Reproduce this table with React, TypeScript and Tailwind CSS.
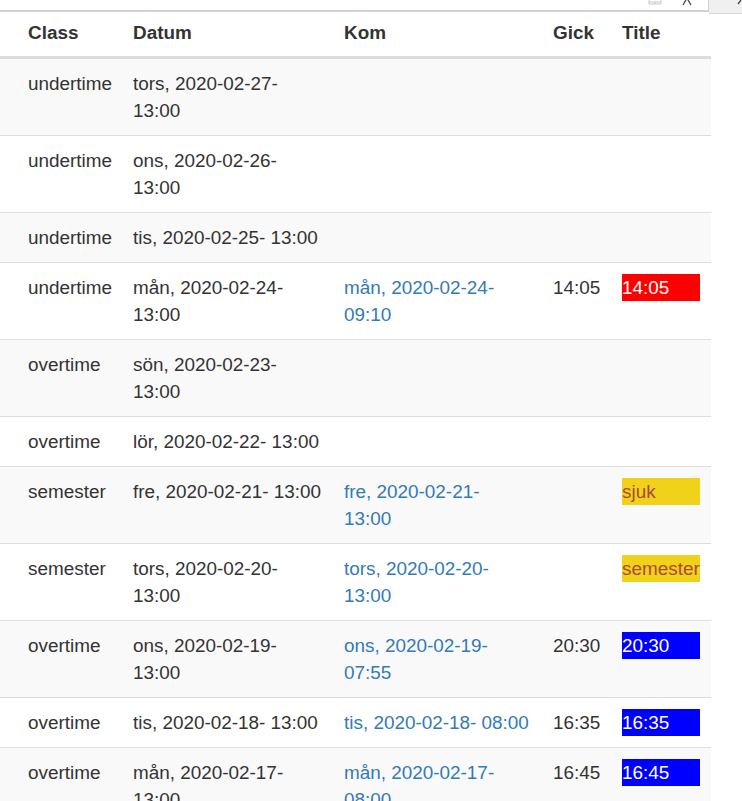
import React from "react";

type Row = {
  cls: string;
  datum: string;
  kom?: string;
  gick?: string;
  title?: { text: string; kind: "red" | "blue" | "yellow" };
};

const rows: Row[] = [
  { cls: "undertime", datum: "tors, 2020-02-27- 13:00" },
  { cls: "undertime", datum: "ons, 2020-02-26- 13:00" },
  { cls: "undertime", datum: "tis, 2020-02-25- 13:00" },
  { cls: "undertime", datum: "mån, 2020-02-24- 13:00", kom: "mån, 2020-02-24- 09:10", gick: "14:05", title: { text: "14:05", kind: "red" } },
  { cls: "overtime", datum: "sön, 2020-02-23- 13:00" },
  { cls: "overtime", datum: "lör, 2020-02-22- 13:00" },
  { cls: "semester", datum: "fre, 2020-02-21- 13:00", kom: "fre, 2020-02-21- 13:00", title: { text: "sjuk", kind: "yellow" } },
  { cls: "semester", datum: "tors, 2020-02-20- 13:00", kom: "tors, 2020-02-20- 13:00", title: { text: "semester", kind: "yellow" } },
  { cls: "overtime", datum: "ons, 2020-02-19- 13:00", kom: "ons, 2020-02-19- 07:55", gick: "20:30", title: { text: "20:30", kind: "blue" } },
  { cls: "overtime", datum: "tis, 2020-02-18- 13:00", kom: "tis, 2020-02-18- 08:00", gick: "16:35", title: { text: "16:35", kind: "blue" } },
  { cls: "overtime", datum: "mån, 2020-02-17- 13:00", kom: "mån, 2020-02-17- 08:00", gick: "16:45", title: { text: "16:45", kind: "blue" } },
];

function TitleBox({ t }: { t: NonNullable<Row["title"]> }) {
  if (t.kind === "red") return <div className="block bg-[#ff0000] text-white whitespace-nowrap">{t.text}</div>;
  if (t.kind === "blue") return <div className="block bg-[#0000ff] text-white whitespace-nowrap">{t.text}</div>;
  return <div className="block bg-[#efd219] text-[#ad4a3a] whitespace-nowrap">{t.text}</div>;
}

export default function App() {
  return (
    <div
      className="min-h-screen bg-white text-[#333333] text-[18.9px] leading-[27px]"
      style={{ fontFamily: '"Liberation Sans", Arial, Helvetica, sans-serif' }}
    >
      <div className="flex h-[14px] items-start">
        <div className="relative h-[12px] w-[709px] border-b-2 border-r border-[#d2d2d2] bg-white">
          <svg className="absolute left-[648px] top-0" width="14" height="6" viewBox="0 0 14 6">
            <path d="M1 0 V4 H13 V0 M1 2 H13 M7 2 V4" stroke="#c8c8c8" strokeWidth="1" fill="none" />
          </svg>
          <svg className="absolute left-[682px] top-0" width="10" height="6" viewBox="0 0 10 6">
            <path d="M1 5 L4 0 M9 5 L6 0" stroke="#444" strokeWidth="1.3" fill="none" />
          </svg>
        </div>
        <div className="relative h-[14px] flex-1 border-b border-[#d6d6d6] bg-[#f0f0f0]">
          <svg className="absolute left-[28px] top-0" width="6" height="6" viewBox="0 0 6 6">
            <path d="M1 4 L4 0" stroke="#444" strokeWidth="1.3" fill="none" />
          </svg>
        </div>
      </div>
      <table className="w-[711px] table-fixed border-collapse">
        <colgroup>
          <col className="w-[122px]" />
          <col className="w-[211px]" />
          <col className="w-[209px]" />
          <col className="w-[69px]" />
          <col className="w-[100px]" />
        </colgroup>
        <thead>
          <tr className="border-b-[3px] border-[#dddddd]">
            <th className="pl-[28px] pr-[11px] pt-[5px] pb-[10px] text-left font-bold align-bottom">Class</th>
            <th className="pl-[11px] pr-[10px] pt-[5px] pb-[10px] text-left font-bold align-bottom">Datum</th>
            <th className="pl-[11px] pr-[12px] pt-[5px] pb-[10px] text-left font-bold align-bottom">Kom</th>
            <th className="pl-[11px] pr-[11px] pt-[5px] pb-[10px] text-left font-bold align-bottom">Gick</th>
            <th className="pl-[11px] pr-[11px] pt-[5px] pb-[10px] text-left font-bold align-bottom">Title</th>
          </tr>
        </thead>
        <tbody>
          {rows.map((r, i) => (
            <tr
              key={i}
              className={`${i % 2 === 0 ? "bg-[#f9f9f9]" : "bg-white"} ${i === 0 ? "" : "border-t border-[#dddddd]"}`}
            >
              <td className="pl-[28px] pr-[11px] py-[11px] align-top whitespace-nowrap">{r.cls}</td>
              <td className="pl-[11px] pr-[10px] py-[11px] align-top">{r.datum}</td>
              <td className="pl-[11px] pr-[12px] py-[11px] align-top text-[#337ab7]">{r.kom ?? ""}</td>
              <td className="pl-[11px] pr-[11px] py-[11px] align-top whitespace-nowrap">{r.gick ?? ""}</td>
              <td className="pl-[11px] pr-[11px] py-[11px] align-top">{r.title ? <TitleBox t={r.title} /> : null}</td>
            </tr>
          ))}
        </tbody>
      </table>
    </div>
  );
}
